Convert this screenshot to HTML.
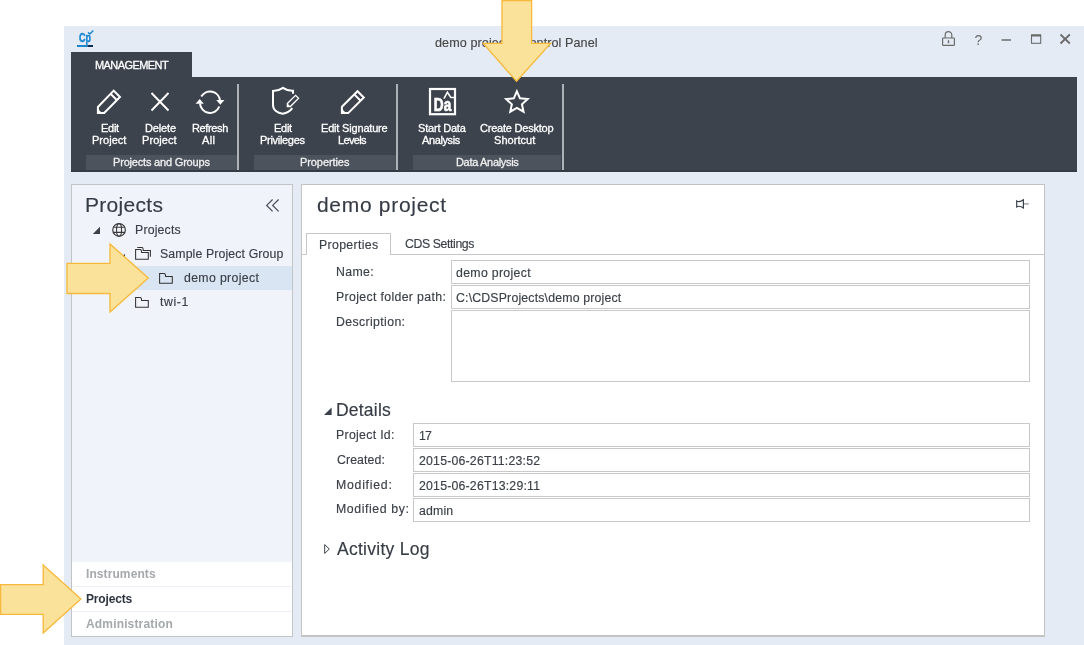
<!DOCTYPE html>
<html><head><meta charset="utf-8">
<style>
*{margin:0;padding:0;box-sizing:border-box}
html,body{width:1084px;height:645px;overflow:hidden;background:#fff;font-family:"Liberation Sans",sans-serif}
.b{position:absolute}
.t{position:absolute;white-space:nowrap;will-change:transform}
svg{position:absolute;left:0;top:0}
</style></head><body>
<div class="b" style="left:64px;top:26px;width:1020px;height:619px;background:#e4ebf5"></div>
<div class="b" style="left:71px;top:52px;width:121px;height:25px;background:#3d434d"></div>
<div class="b" style="left:71px;top:77px;width:1006px;height:94px;background:#3d434d"></div>
<div class="b" style="left:71px;top:170px;width:1006px;height:1.5px;background:#363b43"></div>
<div class="b" style="left:86px;top:155px;width:151px;height:15px;background:#4c535c"></div>
<div class="b" style="left:254px;top:155px;width:142px;height:15px;background:#4c535c"></div>
<div class="b" style="left:413px;top:155px;width:148px;height:15px;background:#4c535c"></div>
<div class="b" style="left:237px;top:84px;width:2px;height:86px;background:#aeb1b6"></div>
<div class="b" style="left:396px;top:84px;width:2px;height:86px;background:#aeb1b6"></div>
<div class="b" style="left:562px;top:84px;width:2px;height:86px;background:#aeb1b6"></div>
<!-- left panel -->
<div class="b" style="left:71px;top:184px;width:222px;height:453px;background:#f0f3f9;border:1px solid #c3c4c6"></div>
<div class="b" style="left:72px;top:266px;width:220px;height:24px;background:#dae5f4"></div>
<div class="b" style="left:72px;top:562px;width:220px;height:74px;background:#ffffff"></div>
<div class="b" style="left:72px;top:586px;width:220px;height:1px;background:#edf1f7"></div>
<div class="b" style="left:72px;top:611px;width:220px;height:1px;background:#edf1f7"></div>
<!-- right panel -->
<div class="b" style="left:301px;top:184px;width:744px;height:453px;background:#ffffff;border:1px solid #c3c3c3;border-bottom:2px solid #c3c3c3"></div>
<div class="b" style="left:302px;top:254px;width:742px;height:1px;background:#c6c6c6"></div>
<div class="b" style="left:306px;top:233px;width:85px;height:22px;background:#ffffff;border:1px solid #c6c6c6;border-bottom:none"></div>
<div class="b" style="left:451px;top:260px;width:579px;height:24px;border:1px solid #c9c9c9"></div>
<div class="b" style="left:451px;top:285px;width:579px;height:24px;border:1px solid #c9c9c9"></div>
<div class="b" style="left:451px;top:310px;width:579px;height:72px;border:1px solid #c9c9c9"></div>
<div class="b" style="left:413px;top:423px;width:617px;height:24px;border:1px solid #c9c9c9"></div>
<div class="b" style="left:413px;top:448px;width:617px;height:24px;border:1px solid #c9c9c9"></div>
<div class="b" style="left:413px;top:473px;width:617px;height:24px;border:1px solid #c9c9c9"></div>
<div class="b" style="left:413px;top:498px;width:617px;height:24px;border:1px solid #c9c9c9"></div>

<div class="t" style="left:435.20px;top:36.93px;font-size:12.6px;line-height:12.6px;font-weight:400;color:#474747;letter-spacing:0.085px;-webkit-text-stroke:0.15px #474747">demo project - Control Panel</div>
<div class="t" style="left:94.60px;top:59.69px;font-size:11px;line-height:11px;font-weight:400;color:#ffffff;letter-spacing:-0.569px;-webkit-text-stroke:0.3px #ffffff">MANAGEMENT</div>
<div class="t" style="left:100.75px;top:122.69px;font-size:11px;line-height:11px;font-weight:400;color:#ffffff;letter-spacing:-0.266px;-webkit-text-stroke:0.3px #ffffff">Edit</div>
<div class="t" style="left:91.85px;top:134.69px;font-size:11px;line-height:11px;font-weight:400;color:#ffffff;letter-spacing:0.020px;-webkit-text-stroke:0.3px #ffffff">Project</div>
<div class="t" style="left:144.50px;top:122.69px;font-size:11px;line-height:11px;font-weight:400;color:#ffffff;letter-spacing:-0.136px;-webkit-text-stroke:0.3px #ffffff">Delete</div>
<div class="t" style="left:141.70px;top:134.69px;font-size:11px;line-height:11px;font-weight:400;color:#ffffff;letter-spacing:0.070px;-webkit-text-stroke:0.3px #ffffff">Project</div>
<div class="t" style="left:191.70px;top:122.69px;font-size:11px;line-height:11px;font-weight:400;color:#ffffff;letter-spacing:-0.366px;-webkit-text-stroke:0.3px #ffffff">Refresh</div>
<div class="t" style="left:202.00px;top:134.69px;font-size:11px;line-height:11px;font-weight:400;color:#ffffff;letter-spacing:0.410px;-webkit-text-stroke:0.3px #ffffff">All</div>
<div class="t" style="left:274.45px;top:122.69px;font-size:11px;line-height:11px;font-weight:400;color:#ffffff;letter-spacing:-0.266px;-webkit-text-stroke:0.3px #ffffff">Edit</div>
<div class="t" style="left:259.55px;top:134.69px;font-size:11px;line-height:11px;font-weight:400;color:#ffffff;letter-spacing:-0.298px;-webkit-text-stroke:0.3px #ffffff">Privileges</div>
<div class="t" style="left:320.70px;top:122.69px;font-size:11px;line-height:11px;font-weight:400;color:#ffffff;letter-spacing:-0.183px;-webkit-text-stroke:0.3px #ffffff">Edit Signature</div>
<div class="t" style="left:338.00px;top:134.69px;font-size:11px;line-height:11px;font-weight:400;color:#ffffff;letter-spacing:-0.659px;-webkit-text-stroke:0.3px #ffffff">Levels</div>
<div class="t" style="left:417.95px;top:122.69px;font-size:11px;line-height:11px;font-weight:400;color:#ffffff;letter-spacing:-0.189px;-webkit-text-stroke:0.3px #ffffff">Start Data</div>
<div class="t" style="left:421.65px;top:134.69px;font-size:11px;line-height:11px;font-weight:400;color:#ffffff;letter-spacing:-0.394px;-webkit-text-stroke:0.3px #ffffff">Analysis</div>
<div class="t" style="left:479.95px;top:122.69px;font-size:11px;line-height:11px;font-weight:400;color:#ffffff;letter-spacing:-0.216px;-webkit-text-stroke:0.3px #ffffff">Create Desktop</div>
<div class="t" style="left:494.30px;top:134.69px;font-size:11px;line-height:11px;font-weight:400;color:#ffffff;letter-spacing:0.042px;-webkit-text-stroke:0.3px #ffffff">Shortcut</div>
<div class="t" style="left:112.80px;top:156.69px;font-size:11px;line-height:11px;font-weight:400;color:#f0f0f0;letter-spacing:-0.187px;-webkit-text-stroke:0.3px #f0f0f0">Projects and Groups</div>
<div class="t" style="left:300.30px;top:156.69px;font-size:11px;line-height:11px;font-weight:400;color:#f0f0f0;letter-spacing:-0.082px;-webkit-text-stroke:0.3px #f0f0f0">Properties</div>
<div class="t" style="left:455.80px;top:156.69px;font-size:11px;line-height:11px;font-weight:400;color:#f0f0f0;letter-spacing:-0.321px;-webkit-text-stroke:0.3px #f0f0f0">Data Analysis</div>
<div class="t" style="left:85.00px;top:193.92px;font-size:21px;line-height:21px;font-weight:400;color:#363c45;letter-spacing:0.306px;-webkit-text-stroke:0.15px #363c45">Projects</div>
<div class="t" style="left:135.00px;top:223.59px;font-size:12.3px;line-height:12.3px;font-weight:400;color:#3b4048;letter-spacing:0.175px;-webkit-text-stroke:0.15px #3b4048">Projects</div>
<div class="t" style="left:160.00px;top:247.59px;font-size:12.3px;line-height:12.3px;font-weight:400;color:#3b4048;letter-spacing:0.124px;-webkit-text-stroke:0.15px #3b4048">Sample Project Group</div>
<div class="t" style="left:184.00px;top:271.59px;font-size:12.3px;line-height:12.3px;font-weight:400;color:#3b4048;letter-spacing:0.348px;-webkit-text-stroke:0.15px #3b4048">demo project</div>
<div class="t" style="left:160.00px;top:295.59px;font-size:12.3px;line-height:12.3px;font-weight:400;color:#3b4048;letter-spacing:0.594px;-webkit-text-stroke:0.15px #3b4048">twi-1</div>
<div class="t" style="left:86.10px;top:567.84px;font-size:12px;line-height:12px;font-weight:700;color:#a5a8ad;letter-spacing:0.090px;">Instruments</div>
<div class="t" style="left:86.10px;top:593.14px;font-size:12px;line-height:12px;font-weight:700;color:#2f3540;letter-spacing:-0.169px;">Projects</div>
<div class="t" style="left:85.80px;top:618.04px;font-size:12px;line-height:12px;font-weight:700;color:#a5a8ad;letter-spacing:0.159px;">Administration</div>
<div class="t" style="left:316.60px;top:193.72px;font-size:21px;line-height:21px;font-weight:400;color:#363c45;letter-spacing:0.694px;-webkit-text-stroke:0.15px #363c45">demo project</div>
<div class="t" style="left:318.50px;top:238.59px;font-size:12.3px;line-height:12.3px;font-weight:400;color:#3b4048;letter-spacing:0.334px;-webkit-text-stroke:0.15px #3b4048">Properties</div>
<div class="t" style="left:405.20px;top:238.09px;font-size:12.3px;line-height:12.3px;font-weight:400;color:#3b4048;letter-spacing:-0.397px;-webkit-text-stroke:0.15px #3b4048">CDS Settings</div>
<div class="t" style="left:336.00px;top:266.19px;font-size:12.3px;line-height:12.3px;font-weight:400;color:#3b4048;letter-spacing:0.375px;-webkit-text-stroke:0.15px #3b4048">Name:</div>
<div class="t" style="left:336.00px;top:291.09px;font-size:12.3px;line-height:12.3px;font-weight:400;color:#3b4048;letter-spacing:0.347px;-webkit-text-stroke:0.15px #3b4048">Project folder path:</div>
<div class="t" style="left:336.00px;top:315.89px;font-size:12.3px;line-height:12.3px;font-weight:400;color:#3b4048;letter-spacing:0.372px;-webkit-text-stroke:0.15px #3b4048">Description:</div>
<div class="t" style="left:456.40px;top:266.89px;font-size:12.3px;line-height:12.3px;font-weight:400;color:#3b4048;letter-spacing:0.321px;-webkit-text-stroke:0.15px #3b4048">demo project</div>
<div class="t" style="left:456.40px;top:291.89px;font-size:12.3px;line-height:12.3px;font-weight:400;color:#3b4048;letter-spacing:0.178px;-webkit-text-stroke:0.15px #3b4048">C:\CDSProjects\demo project</div>
<div class="t" style="left:336.20px;top:401.79px;font-size:17.5px;line-height:17.5px;font-weight:400;color:#363c45;letter-spacing:0.210px;-webkit-text-stroke:0.15px #363c45">Details</div>
<div class="t" style="left:336.00px;top:428.69px;font-size:12.3px;line-height:12.3px;font-weight:400;color:#3b4048;letter-spacing:0.306px;-webkit-text-stroke:0.15px #3b4048">Project Id:</div>
<div class="t" style="left:337.00px;top:453.69px;font-size:12.3px;line-height:12.3px;font-weight:400;color:#3b4048;letter-spacing:0.093px;-webkit-text-stroke:0.15px #3b4048">Created:</div>
<div class="t" style="left:336.00px;top:478.59px;font-size:12.3px;line-height:12.3px;font-weight:400;color:#3b4048;letter-spacing:0.740px;-webkit-text-stroke:0.15px #3b4048">Modified:</div>
<div class="t" style="left:336.00px;top:503.19px;font-size:12.3px;line-height:12.3px;font-weight:400;color:#3b4048;letter-spacing:0.592px;-webkit-text-stroke:0.15px #3b4048">Modified by:</div>
<div class="t" style="left:418.90px;top:429.99px;font-size:12.3px;line-height:12.3px;font-weight:400;color:#3b4048;letter-spacing:-0.939px;-webkit-text-stroke:0.15px #3b4048">17</div>
<div class="t" style="left:418.80px;top:454.99px;font-size:12.3px;line-height:12.3px;font-weight:400;color:#3b4048;letter-spacing:0.204px;-webkit-text-stroke:0.15px #3b4048">2015-06-26T11:23:52</div>
<div class="t" style="left:418.80px;top:479.99px;font-size:12.3px;line-height:12.3px;font-weight:400;color:#3b4048;letter-spacing:0.204px;-webkit-text-stroke:0.15px #3b4048">2015-06-26T13:29:11</div>
<div class="t" style="left:418.80px;top:504.79px;font-size:12.3px;line-height:12.3px;font-weight:400;color:#3b4048;letter-spacing:0.162px;-webkit-text-stroke:0.15px #3b4048">admin</div>
<div class="t" style="left:336.80px;top:541.09px;font-size:17.5px;line-height:17.5px;font-weight:400;color:#363c45;letter-spacing:0.268px;-webkit-text-stroke:0.15px #363c45">Activity Log</div>
<svg width="1084" height="645" viewBox="0 0 1084 645">
<!-- logo -->
<text x="79" y="42" font-family="Liberation Sans" font-weight="700" font-size="13" fill="#1a86d0" stroke="#1a86d0" stroke-width="0.5" textLength="12" lengthAdjust="spacingAndGlyphs">Cp</text>
<path d="M88,32.4 L89.9,34 L93.3,30.4" stroke="#1a86d0" stroke-width="1.4" fill="none"/>
<rect x="77" y="45" width="10.5" height="2" fill="#1a86d0"/><rect x="87.5" y="45" width="5.5" height="2" fill="#0d2f55"/>
<!-- window controls -->
<g stroke="#6b6b6b" fill="none">
<rect x="942.6" y="38" width="11.8" height="7.3" stroke-width="1.2" rx="0.5"/>
<path d="M945.2,38 V35 A3.3,3.3 0 0 1 951.8,35 V38" stroke-width="1.2"/>
<path d="M948.5,40.2 V43.2" stroke-width="1.4"/>
<path d="M1001.5,40 H1011" stroke-width="1.5"/>
<rect x="1031.5" y="35" width="9.2" height="8.3" stroke-width="1.1"/>
<path d="M1031,35.5 H1041" stroke-width="2"/>
<path d="M1060.5,34.5 L1069.8,43.5 M1069.8,34.5 L1060.5,43.5" stroke-width="1.8"/>
</g>
<text x="974.5" y="44.5" font-family="Liberation Sans" font-size="14" fill="#6b6b6b">?</text>
<!-- ribbon icons -->
<g stroke="#ffffff" fill="none" stroke-width="2">
<path d="M97.9,107 L113.7,90.6 L120,97 L104.2,112.9 L97.9,112.9 Z" stroke-linejoin="miter"/>
<path d="M110.5,93.8 L117,100.3"/>
<path d="M97,108 L97,114 L103,114 Z" fill="#fff" stroke="none"/>
<path d="M151.5,93 L168.5,110.5 M168.5,93 L151.5,110.5" stroke-width="1.9"/>
<path d="M201.3,96.6 A10,10 0 0 1 220,101"/>
<path d="M219.3,106.5 A10,10 0 0 1 200,103.5"/>
</g>
<path d="M216.3,100 L224.4,100 L220.3,104.8 Z" fill="#fff"/>
<path d="M195.6,103.8 L203.8,103.8 L199.7,99 Z" fill="#fff"/>
<!-- shield -->
<g stroke="#ffffff" fill="none" stroke-width="2">
<path d="M293,93.8 V90.8 C289,91 285.5,89.5 283,87.8 C280.5,89.5 277,91 273,91 V105 C273,110 277.5,113 282.8,113.8 C286.5,113.3 290,111.3 292.3,108.2"/>
<path d="M140,126" />
</g>
<g stroke="#ffffff" fill="none" stroke-width="1.3">
<path d="M287.6,103.3 L295.6,95.3 L298.6,98.3 L290.6,106.3 L287.6,106.3 Z"/>
<path d="M287.4,104.5 L287.4,106.7 L289.6,106.7 Z" fill="#fff"/>
</g>
<!-- pencil 2 -->
<g stroke="#ffffff" fill="none" stroke-width="2">
<path d="M341.9,106.8 L357.5,91.2 L363.8,97.5 L348.2,113.1 L341.9,113.1 Z"/>
<path d="M354.3,94.4 L360.6,100.7"/>
</g>
<path d="M341,108 L341,114 L347,114 Z" fill="#fff"/>
<!-- Da -->
<rect x="430" y="89" width="25" height="25.2" stroke="#fff" stroke-width="2.2" fill="none"/>
<path d="M443.9,98.6 L447.4,92.3 L450.8,97.4 H455" stroke="#fff" stroke-width="1.5" fill="none"/>
<text x="433.8" y="110.7" font-family="Liberation Sans" font-weight="700" font-size="18" fill="#fff" textLength="17.4" lengthAdjust="spacingAndGlyphs" stroke="#fff" stroke-width="0.7">Da</text>
<!-- star -->
<path d="M516.90,91.30 L520.02,98.31 L527.65,99.11 L521.94,104.24 L523.54,111.74 L516.90,107.90 L510.26,111.74 L511.86,104.24 L506.15,99.11 L513.78,98.31 Z" stroke="#fff" stroke-width="2" fill="none" stroke-linejoin="miter"/>
<!-- tree -->
<path d="M92.8,234 L100,234 L100,226.8 Z" fill="#3b414a"/>
<path d="M120.7,258 L125,258 L125,253.7 Z" fill="#3b414a"/>
<g stroke="#3a3a3a" fill="none" stroke-width="1.1">
<circle cx="119.05" cy="229.9" r="6.3" stroke-width="1.2"/>
<ellipse cx="119.05" cy="229.9" rx="2.5" ry="6.3" stroke-width="1.1"/>
<path d="M113.2,227.3 H124.9 M113.2,232.4 H124.9" stroke-width="1.1"/>
</g>
<g stroke="#333" fill="none" stroke-width="1.05">
<path d="M135.6,249.4 H140 Q141,249.4 141.3,250.4 L141.6,252.4 H148.3 V259.2 H135.6 Z"/>
<path d="M137.3,247.5 H142 Q142.8,247.5 143,248.5 L143.2,250.4 H150.4 V256.7"/>
<path d="M159.6,273.4 H164 Q165,273.4 165.3,274.4 L165.6,276.4 H172.3 V283.2 H159.6 Z"/>
<path d="M135.6,297.4 H140 Q141,297.4 141.3,298.4 L141.6,300.4 H148.3 V307.2 H135.6 Z"/>
</g>
<path d="M272.6,199.5 L266.7,205.4 L272.6,211.4 M278.6,199.5 L272.7,205.4 L278.6,211.4" stroke="#4a515b" stroke-width="1.3" fill="none"/>
<!-- pin -->
<path d="M1016.7,200.9 V206.9 Q1019.5,205.2 1023.4,207.9 V199.8 Q1019.5,202.6 1016.7,200.9 Z" stroke="#3b414a" stroke-width="1.2" fill="none"/>
<path d="M1024,203.9 H1028.8" stroke="#7b8088" stroke-width="1.1"/>
<!-- details triangles -->
<path d="M324,415 L331.6,415 L331.6,407.4 Z" fill="#3b414a"/>
<path d="M324.7,544.6 L329.3,549 L324.7,553.4 Z" stroke="#3b414a" stroke-width="1" fill="none"/>
<!-- arrows -->
<g fill="#fbe29b" stroke="#f6b93b" stroke-width="1.3" stroke-linejoin="miter">
<path d="M502,0.6 V43.4 H483.2 L516.5,81.3 L550.6,43.4 H531.6 V0.6 Z"/>
<path d="M67,263.3 H110 V244 L148.3,278 L110,312 V293.5 H67 Z"/>
<path d="M0.6,584.6 H43.2 V565 L80.9,599 L43.2,633.1 V614.3 H0.6 Z"/>
</g>
</svg>

</body></html>
